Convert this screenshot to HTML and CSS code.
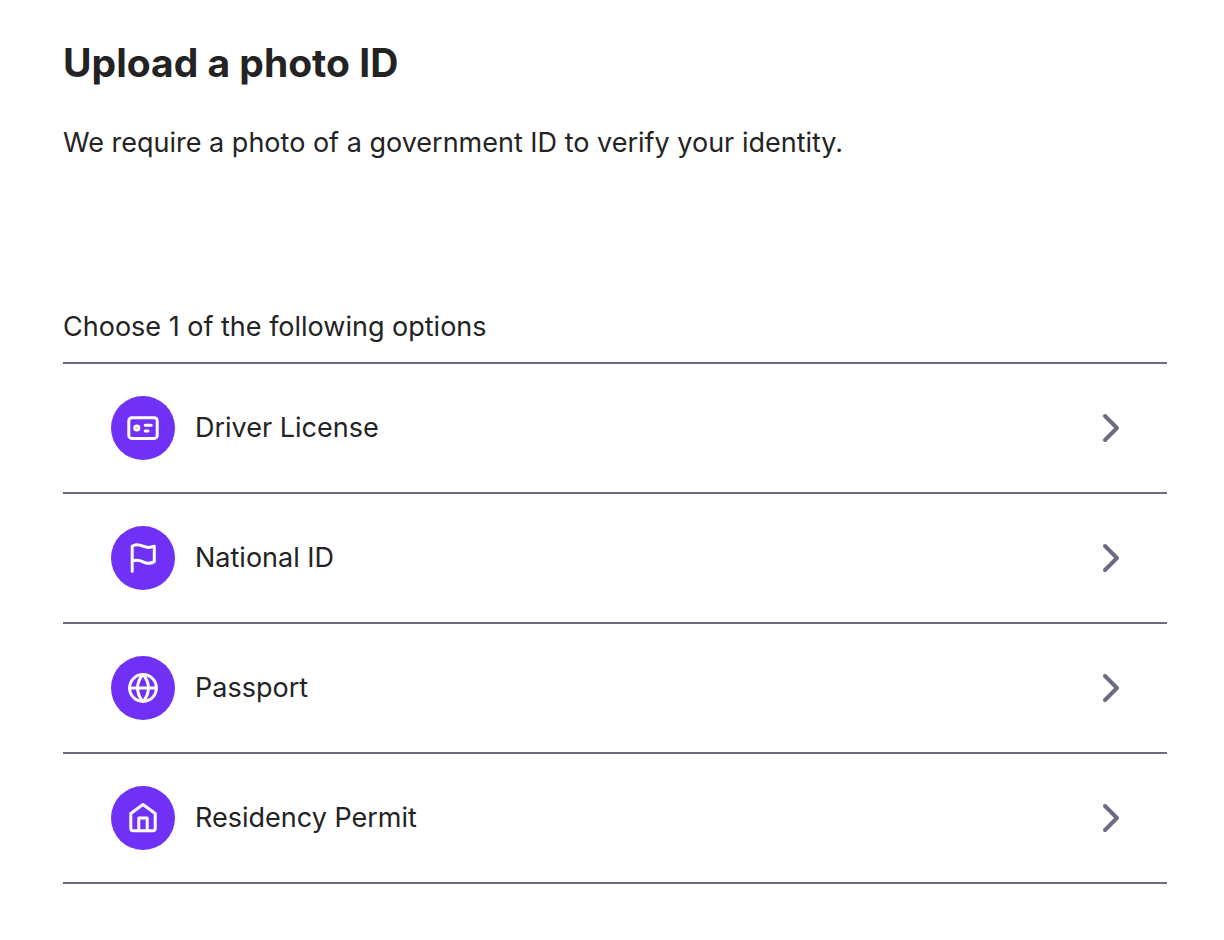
FILE: index.html
```html
<!DOCTYPE html>
<html lang="en">
<head>
<meta charset="utf-8">
<meta name="viewport" content="width=device-width, initial-scale=1">
<title>Upload a photo ID</title>
<link rel="stylesheet" href="styles.css">
</head>
<body>
<main class="page">
  <h1 class="title">Upload a photo ID</h1>
  <p class="intro">We require a photo of a government ID to verify your identity.</p>
  <h2 class="prompt" id="prompt">Choose 1 of the following options</h2>
  <ul class="options" aria-labelledby="prompt">
    <li class="item">
      <button class="option" type="button">
        <svg class="badge" viewBox="0 0 64 64" aria-hidden="true">
          <rect x="17.8" y="21.8" width="28.4" height="20.6" rx="3"/>
          <circle cx="25.8" cy="32" r="2.1"/>
          <path d="M34.2 29.2h6M34.2 35h2.8"/>
        </svg>
        <span class="label">Driver License</span>
        <svg class="chevron" viewBox="0 0 18 30" aria-hidden="true"><path d="M3 3l12 12L3 27"/></svg>
      </button>
    </li>
    <li class="item">
      <button class="option" type="button">
        <svg class="badge" viewBox="0 0 64 64" aria-hidden="true">
          <path d="M21.2 45.2V20.2C23.5 18.5 28 18.3 32 20.2C36 22 40 21.7 43.3 20.2V35.6C40 37.6 36 37.8 32 35.8C28 33.9 24.5 33.6 21.2 35.2"/>
        </svg>
        <span class="label">National ID</span>
        <svg class="chevron" viewBox="0 0 18 30" aria-hidden="true"><path d="M3 3l12 12L3 27"/></svg>
      </button>
    </li>
    <li class="item">
      <button class="option" type="button">
        <svg class="badge" viewBox="0 0 64 64" aria-hidden="true">
          <circle cx="32" cy="32" r="13.4"/>
          <path d="M18.6 32h26.8M32 18.6C35.5 22.4 37.4 27 37.4 32C37.4 37 35.5 41.6 32 45.4C28.5 41.6 26.6 37 26.6 32C26.6 27 28.5 22.4 32 18.6Z"/>
        </svg>
        <span class="label">Passport</span>
        <svg class="chevron" viewBox="0 0 18 30" aria-hidden="true"><path d="M3 3l12 12L3 27"/></svg>
      </button>
    </li>
    <li class="item">
      <button class="option" type="button">
        <svg class="badge" viewBox="0 0 64 64" aria-hidden="true">
          <path d="M32 18.5L19.8 27.5V42.6Q19.8 44.8 22 44.8H42Q44.2 44.8 44.2 42.6V27.5Z"/>
          <path d="M27.8 44.8V32H36.2V44.8"/>
        </svg>
        <span class="label">Residency Permit</span>
        <svg class="chevron" viewBox="0 0 18 30" aria-hidden="true"><path d="M3 3l12 12L3 27"/></svg>
      </button>
    </li>
  </ul>
</main>
</body>
</html>
```
FILE: styles.css
```css
* {
  box-sizing: border-box;
}

body {
  margin: 0;
  background: #fff;
  color: #232324;
  font-family: Inter, "Noto Sans", sans-serif;
  font-size: 27px;
  line-height: 40px;
}

.page {
  padding: 35px 57px 56px 63px;
}

.title {
  margin: 0;
  font-size: 39px;
  line-height: 56px;
  font-weight: 700;
}

.intro {
  margin: 32px 0 144px;
}

.prompt {
  margin: 0;
  font-size: 27px;
  font-weight: 400;
}

.options {
  margin: 15px 0 0;
  padding: 0;
  list-style: none;
  border-top: 2px solid #6b6c82;
}

.item {
  border-bottom: 2px solid #6b6c82;
}

.option {
  display: flex;
  align-items: center;
  gap: 20px;
  width: 100%;
  padding: 32px 47px 32px 48px;
  border: 0;
  background: none;
  color: inherit;
  font: inherit;
  line-height: 42px;
  text-align: left;
  cursor: pointer;
}

.badge {
  flex: none;
  width: 64px;
  height: 64px;
  border-radius: 50%;
  background: #7030f5;
  fill: none;
  stroke: #fff;
  stroke-width: 3;
  stroke-linecap: round;
  stroke-linejoin: round;
}

.label {
  flex: 1;
}

.chevron {
  flex: none;
  width: 18px;
  height: 30px;
  fill: none;
  stroke: #6b6c82;
  stroke-width: 4;
  stroke-linecap: round;
  stroke-linejoin: round;
}
```
